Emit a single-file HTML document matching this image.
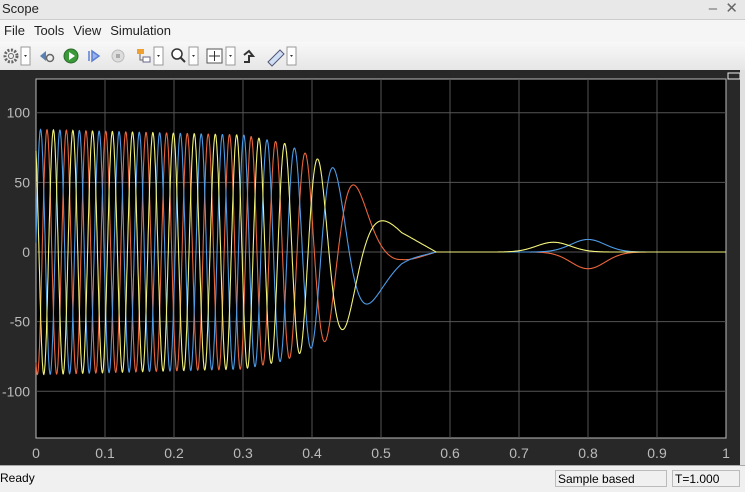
<!DOCTYPE html>
<html><head><meta charset="utf-8"><style>
body{margin:0;width:745px;height:491px;overflow:hidden;background:#f0f0f0;font-family:"Liberation Sans",sans-serif;position:relative}
.title{position:absolute;left:0;top:0;width:745px;height:19px;background:#e8e8e8;border-bottom:1px solid #ccc;font-size:13px;line-height:17px;padding-left:2px;color:#222}
.menu{position:absolute;top:20px;left:0;width:745px;height:22px;background:#f5f5f5;font-size:13px;line-height:22px;color:#222}
.menu span{margin-left:4px;margin-right:5px}
.tb{position:absolute;top:42px;left:0;width:745px;height:28px;background:linear-gradient(#f8f8f8,#e6e6e6)}
.plotbg{position:absolute;top:70px;left:0;width:740px;height:395px;background:#282828}
.right{position:absolute;top:70px;left:740px;width:5px;height:395px;background:#e0e0e0}
.status{position:absolute;top:465px;left:0;width:745px;height:26px;background:#f0f0f0;border-top:1px solid #aaa;font-size:12px}
.box{position:absolute;top:4px;height:17px;border:1px solid #bbb;line-height:16px;padding-left:2px;box-sizing:border-box}
svg text{font-family:"Liberation Sans",sans-serif}
</style></head><body>
<div class="title">Scope<span style="position:absolute;right:9px;top:0;color:#666;font-size:15px">–&nbsp;&nbsp;✕</span></div>
<div class="menu"><span>File</span><span>Tools</span><span>View</span><span>Simulation</span></div>
<div class="tb"><svg width="300" height="28">
<circle cx="11" cy="14" r="6" fill="none" stroke="#666" stroke-width="3" stroke-dasharray="2 1.5"/><circle cx="11" cy="14" r="2.5" fill="none" stroke="#666"/>
<rect x="21" y="5" width="9" height="18" fill="#fff" stroke="#999"/><path d="M24 13h3l-1.5 2z" fill="#333"/>
<path d="M40 14l6-5v10z" fill="#5a7fb0"/><circle cx="50" cy="16" r="3.5" fill="none" stroke="#666" stroke-width="1.5"/>
<circle cx="71" cy="14" r="7" fill="#3a9a3a" stroke="#2a6a2a"/><path d="M69 10v8l6-4z" fill="#fff"/>
<path d="M89 9v10M92 9v10l7-5z" stroke="#5a7fd0" fill="#9ab0f0" stroke-width="1.5"/>
<circle cx="118" cy="14" r="6" fill="#ddd" stroke="#bbb"/><rect x="116" y="12" width="4" height="4" fill="#aaa"/>
<rect x="137" y="7" width="7" height="5" fill="#f0a030"/><rect x="143" y="15" width="7" height="5" fill="#fff" stroke="#668"/><path d="M140 12v6h3" stroke="#666" fill="none"/>
<rect x="154" y="5" width="9" height="18" fill="#fff" stroke="#999"/><path d="M157 13h3l-1.5 2z" fill="#333"/>
<circle cx="177" cy="12" r="5" fill="#fff" stroke="#333" stroke-width="1.5"/><path d="M180 15l5 5" stroke="#333" stroke-width="2"/>
<rect x="189" y="5" width="9" height="18" fill="#fff" stroke="#999"/><path d="M192 13h3l-1.5 2z" fill="#333"/>
<rect x="207" y="7" width="15" height="14" fill="#fff" stroke="#555"/><path d="M214.5 9v10M209 14h11" stroke="#333"/>
<rect x="226" y="5" width="9" height="18" fill="#fff" stroke="#999"/><path d="M229 13h3l-1.5 2z" fill="#333"/>
<path d="M244 20h5v-6h4l-4-5-5 4" stroke="#333" stroke-width="2" fill="none"/>
<path d="M268 20l12-12 4 4-12 12z" fill="#cfe0f5" stroke="#557"/>
<rect x="287" y="5" width="9" height="18" fill="#fff" stroke="#999"/><path d="M290 13h3l-1.5 2z" fill="#333"/>
</svg></div>
<div class="plotbg"></div><div class="right"></div>
<svg id="p" style="position:absolute;left:0;top:70px" width="740" height="395"></svg>
<div class="status"><span style="position:absolute;left:0;top:5px">Ready</span>
<div class="box" style="left:555px;width:112px">Sample based</div>
<div class="box" style="left:672px;width:68px">T=1.000</div></div>
<script>
const s=document.getElementById('p');let h='';
const X=t=>36+t*690,Y=v=>182-v*1.393;
h+='<rect x="36" y="9" width="690" height="359" fill="#000" stroke="#bbb"/>';
for(let i=1;i<10;i++){h+=`<line x1="${X(i/10)}" y1="9" x2="${X(i/10)}" y2="368" stroke="#555"/>`;}
[100,50,0,-50,-100].forEach(v=>{h+=`<line x1="36" y1="${Y(v)}" x2="726" y2="${Y(v)}" stroke="#555"/><text x="30" y="${Y(v)+5}" fill="#bbb" font-size="14" text-anchor="end">${v}</text>`;});
for(let i=0;i<=10;i++){let l=i==0?'0':i==10?'1':'0.'+i;h+=`<text x="${X(i/10)}" y="388" fill="#bbb" font-size="14" text-anchor="middle">${l}</text>`;}
function pw(p,t){for(let i=0;i<p.length-1;i++)if(t<=p[i+1][0]){let a=p[i],b=p[i+1];return a[1]+(b[1]-a[1])*(t-a[0])/(b[0]-a[0]);}return p[p.length-1][1]}
const AP=[[0,88],[0.3,84],[0.36,78],[0.42,64],[0.45,54],[0.49,34],[0.53,14],[0.58,0],[2,0]];
const FP=[[0,36],[0.3,32],[0.38,22],[0.44,11],[0.5,4],[0.56,0],[2,0]];
const cols=['#4d9be6','#e8653c','#f2f27a'],bumps=[[0.8,9],[0.8,-12],[0.75,7]];
const N=3000;let ph=0;let pts=[[],[],[]];
for(let i=0;i<=N;i++){let t=i/N;ph+=2*Math.PI*pw(FP,t)/N;let a=pw(AP,t);
for(let k=0;k<3;k++){let v=a*Math.sin(ph-k*2*Math.PI/3);let b=bumps[k];v+=b[1]*Math.exp(-Math.pow((t-b[0])/0.035,2));pts[k].push(X(t).toFixed(1)+','+Y(v).toFixed(1));}}
[1,0,2].forEach(k=>{h+=`<polyline points="${pts[k].join(' ')}" fill="none" stroke="${cols[k]}" stroke-width="1.1"/>`;});
h+='<rect x="728" y="3" width="12" height="6" fill="none" stroke="#eee"/>';
s.innerHTML=h;
</script>
</body></html>
